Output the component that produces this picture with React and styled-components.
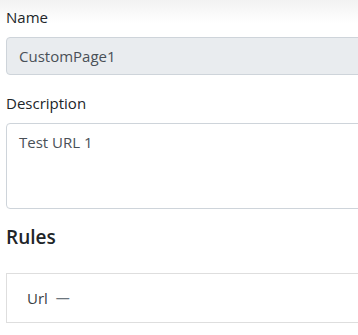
import React from "react";
import styled, { createGlobalStyle } from "styled-components";

const GlobalStyle = createGlobalStyle`
  html, body {
    margin: 0;
    padding: 0;
    overflow: hidden;
    background: #fff;
  }
  * {
    box-sizing: border-box;
  }
`;

const Page = styled.div`
  width: 400px;
  padding: 5px 0 0 6px;
  font-family: "Open Sans", "Noto Sans", sans-serif;
  font-size: 16px;
  line-height: 24px;
  color: #212529;
  background: linear-gradient(#f2f2f2 0px, #fafafa 14px, #fff 24px);
  min-height: 335px;
`;

const FormGroup = styled.div`
  margin-bottom: 16px;
`;

const Label = styled.label`
  display: block;
  margin-bottom: 8px;
  font-size: 15px;
`;

const Input = styled.input`
  display: block;
  width: 100%;
  height: 38px;
  padding: 6px 12px;
  font: inherit;
  font-size: 15px;
  color: #495057;
  background: ${({ disabled }) => (disabled ? "#e9ecef" : "#fff")};
  border: 1px solid #ced4da;
  border-radius: 4px;
  outline: none;
`;

const TextArea = styled.textarea`
  display: block;
  width: 100%;
  height: 86px;
  padding: 6px 12px;
  font: inherit;
  font-size: 15px;
  color: #495057;
  background: #fff;
  border: 1px solid #ced4da;
  border-radius: 4px;
  resize: none;
  outline: none;
`;

const Heading = styled.h5`
  margin: 0 0 24px;
  font-size: 19px;
  font-weight: 600;
  line-height: 24px;
  color: #212529;
`;

const RuleCard = styled.div`
  display: flex;
  align-items: center;
  gap: 8px;
  padding: 12px 20px;
  border: 1px solid #dedede;
  font-size: 15px;
`;

const RuleName = styled.span`
  color: #3a3f44;
`;

const RuleValue = styled.span`
  color: #6c757d;
  font-size: 14px;
`;

export default function App() {
  return (
    <>
      <GlobalStyle />
      <Page>
        <FormGroup>
          <Label>Name</Label>
          <Input disabled value="CustomPage1" readOnly />
        </FormGroup>
        <FormGroup>
          <Label>Description</Label>
          <TextArea value="Test URL 1" readOnly />
        </FormGroup>
        <Heading>Rules</Heading>
        <RuleCard>
          <RuleName>Url</RuleName>
          <RuleValue>—</RuleValue>
        </RuleCard>
      </Page>
    </>
  );
}
